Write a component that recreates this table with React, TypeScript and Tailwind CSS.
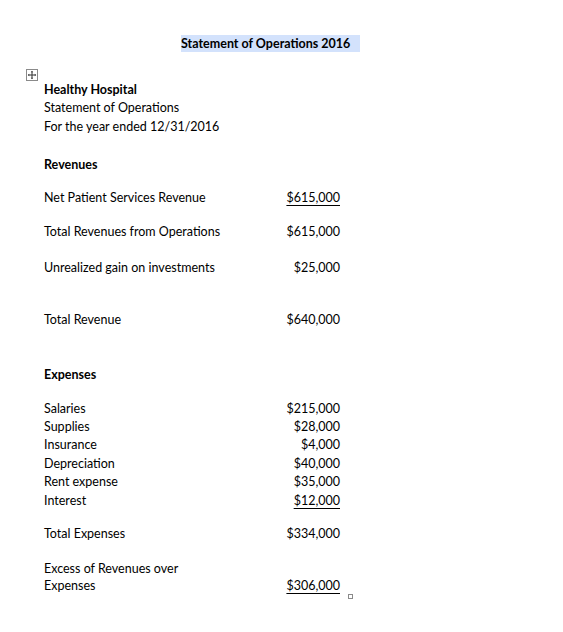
import React from "react";

const Row = ({
  label,
  amount,
  u,
  h,
  mt,
}: {
  label: string;
  amount?: string;
  u?: boolean;
  h: string;
  mt: string;
}) => (
  <div className={`flex items-center ${h} ${mt}`}>
    <div className="w-[230px] shrink-0">{label}</div>
    <div className="w-[66px] text-right">
      {amount && (
        <span className={u ? "underline decoration-1 underline-offset-[3px]" : ""}>{amount}</span>
      )}
    </div>
  </div>
);

export default function App() {
  return (
    <div
      className="w-[563px] h-[632px] bg-white text-black text-[12.5px] relative"
      style={{ fontFamily: "Lato, 'Open Sans', sans-serif" }}
    >
      <div className="pt-[35px] pl-[181px]">
        <span className="inline-block bg-[#d3e2fc] h-[17px] leading-[17px] pr-[10px] font-bold">
          Statement of Operations 2016
        </span>
      </div>
      <div className="ml-[26px] mt-[15px] w-[12px] h-[12px] border border-[#8a8a8a] flex items-center justify-center">
        <svg width="10" height="10" viewBox="0 0 10 10">
          <path d="M5 1.5V8.5M1.5 5H8.5" stroke="#333" strokeWidth="1" fill="none" />
          <path d="M5 0.8L3.8 2.2H6.2ZM5 9.2L3.8 7.8H6.2ZM0.8 5L2.2 3.8V6.2ZM9.2 5L7.8 3.8V6.2Z" fill="#333" />
        </svg>
      </div>
      <div className="pl-[44px]">
        <div className="mt-[1px] h-[18px] flex items-center font-bold">Healthy Hospital</div>
        <div className="h-[18px] flex items-center">Statement of Operations</div>
        <div className="mt-[1px] h-[18px] flex items-center">For the year ended 12/31/2016</div>
        <div className="mt-[20px] h-[18px] flex items-center font-bold">Revenues</div>
        <Row mt="mt-[15px]" h="h-[18px]" label="Net Patient Services Revenue" amount="$615,000" u />
        <Row mt="mt-[16px]" h="h-[18px]" label="Total Revenues from Operations" amount="$615,000" />
        <Row mt="mt-[18px]" h="h-[18px]" label="Unrealized gain on investments" amount="$25,000" />
        <Row mt="mt-[34px]" h="h-[18px]" label="Total Revenue" amount="$640,000" />
        <div className="mt-[37px] h-[18px] flex items-center font-bold">Expenses</div>
        <Row mt="mt-[15px]" h="h-[18.4px]" label="Salaries" amount="$215,000" />
        <Row mt="mt-0" h="h-[18.4px]" label="Supplies" amount="$28,000" />
        <Row mt="mt-0" h="h-[18.4px]" label="Insurance" amount="$4,000" />
        <Row mt="mt-0" h="h-[18.4px]" label="Depreciation" amount="$40,000" />
        <Row mt="mt-0" h="h-[18.4px]" label="Rent expense" amount="$35,000" />
        <Row mt="mt-0" h="h-[18.4px]" label="Interest" amount="$12,000" u />
        <Row mt="mt-[15px]" h="h-[18px]" label="Total Expenses" amount="$334,000" />
        <Row mt="mt-[17px]" h="h-[18px]" label="Excess of Revenues over" />
        <div className="flex items-center h-[17px] relative">
          <div className="w-[230px] shrink-0">Expenses</div>
          <div className="w-[66px] text-right">
            <span className="underline decoration-1 underline-offset-[3px]">$306,000</span>
          </div>
          <div className="absolute left-[304px] top-[16px] w-[5px] h-[5px] border border-[#8a8a8a]" />
        </div>
      </div>
    </div>
  );
}
